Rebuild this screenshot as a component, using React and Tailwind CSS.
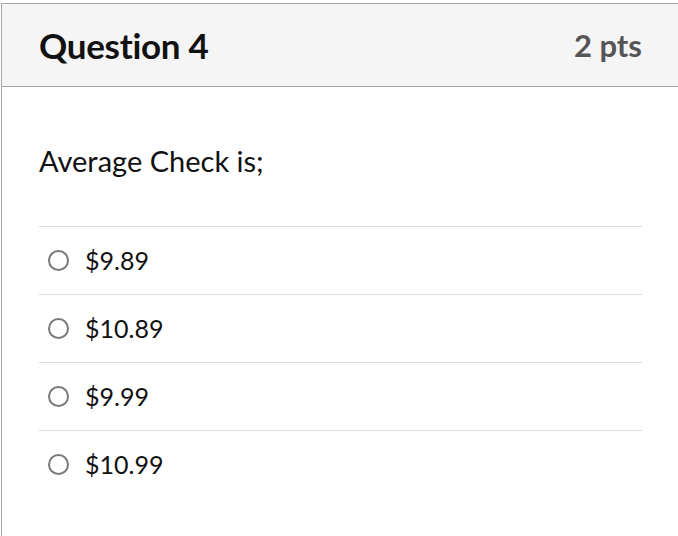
export default function App() {
  const options = ["$9.89", "$10.89", "$9.99", "$10.99"];

  return (
    <div className="w-[678px] h-[536px] bg-white overflow-hidden pt-[3px] pl-[1px] font-['Lato',sans-serif]">
      <div className="border-l border-t border-[#a6a6a6] h-[540px]">
        <div className="h-[83px] bg-[#f5f5f5] border-b border-[#a6a6a6] flex items-center justify-between pl-[37px] pr-[36px]">
          <h2 className="text-[35px] font-bold text-[#111] tracking-[-0.3px]">Question 4</h2>
          <span className="text-[31px] font-bold text-[#555]">2 pts</span>
        </div>
        <div className="pl-[37px] pr-[36px]">
          <p className="text-[29px] text-[#111] mt-[55px] mb-[46px] leading-[38px]">Average Check is;</p>
          <div>
            {options.map((opt) => (
              <div key={opt} className="border-t border-[#dcdcdc] h-[68px] flex items-center gap-[16px] pl-[9px]">
                <span className="w-[21px] h-[21px] rounded-full border-2 border-[#7a7a7a] bg-white"></span>
                <span className="text-[25px] text-[#111]">{opt}</span>
              </div>
            ))}
          </div>
        </div>
      </div>
    </div>
  );
}
